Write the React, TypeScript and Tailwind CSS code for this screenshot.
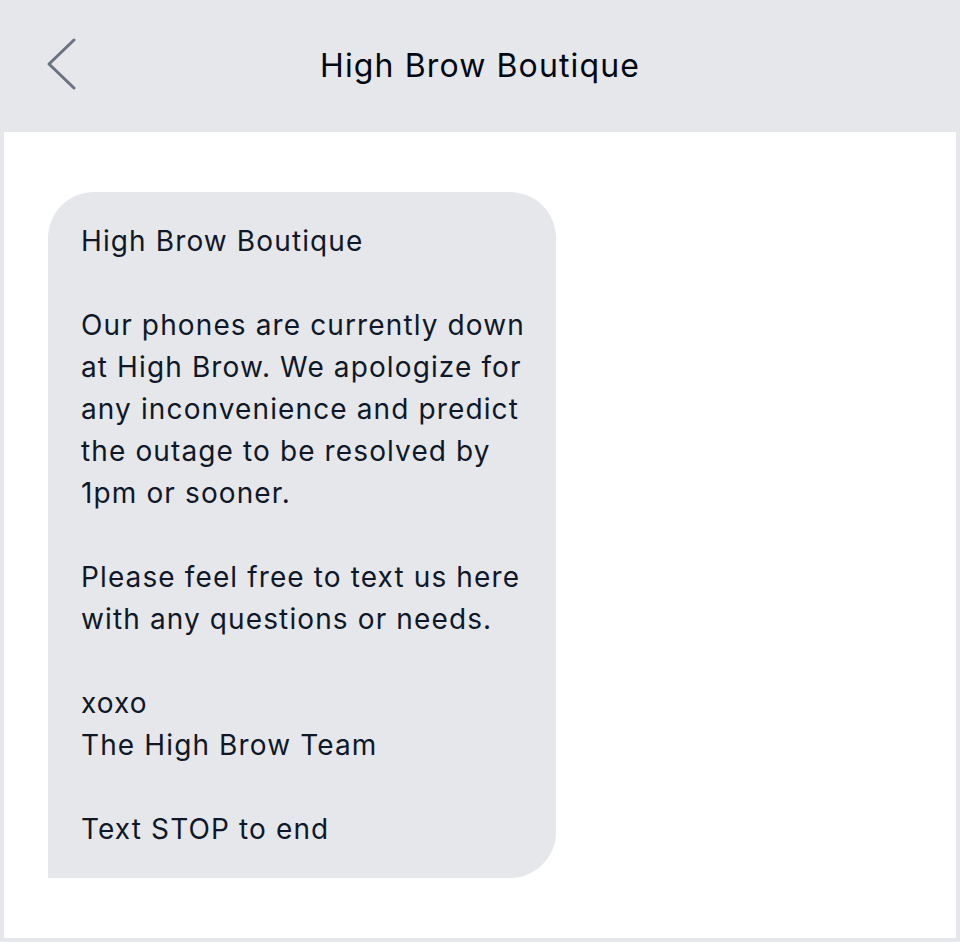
const font = { fontFamily: 'Inter, "Noto Sans", sans-serif' };

function BackChevron() {
  return (
    <svg width="32" height="54" viewBox="0 0 32 54" fill="none" className="text-gray-500">
      <polyline
        points="29,3 4,27 29,51"
        stroke="currentColor"
        strokeWidth="3"
        strokeLinecap="round"
        strokeLinejoin="round"
      />
    </svg>
  );
}

export default function App() {
  return (
    <div className="flex h-[942px] w-[960px] flex-col bg-gray-200 px-1 pb-1" style={font}>
      <header className="relative flex h-[132px] shrink-0 items-center justify-center">
        <button className="absolute left-[41px] top-[37px]">
          <BackChevron />
        </button>
        <h1 className="text-[32px] font-normal tracking-[0.035em] text-gray-950">High Brow Boutique</h1>
      </header>
      <main className="flex-1 bg-white px-[44px] pt-[60px]">
        <div className="w-[508px] rounded-[46px] rounded-bl-none bg-gray-200 pb-[28px] pl-[33px] pr-[20px] pt-[28px] text-[28px] leading-[42px] tracking-[0.04em] whitespace-nowrap text-gray-900">
          <p>High Brow Boutique</p>
          <p className="mt-[42px]">
            Our phones are currently down
            <br />
            at High Brow. We apologize for
            <br />
            any inconvenience and predict
            <br />
            the outage to be resolved by
            <br />
            1pm or sooner.
          </p>
          <p className="mt-[42px]">
            Please feel free to text us here
            <br />
            with any questions or needs.
          </p>
          <p className="mt-[42px]">xoxo</p>
          <p>The High Brow Team</p>
          <p className="mt-[42px]">Text STOP to end</p>
        </div>
      </main>
    </div>
  );
}
